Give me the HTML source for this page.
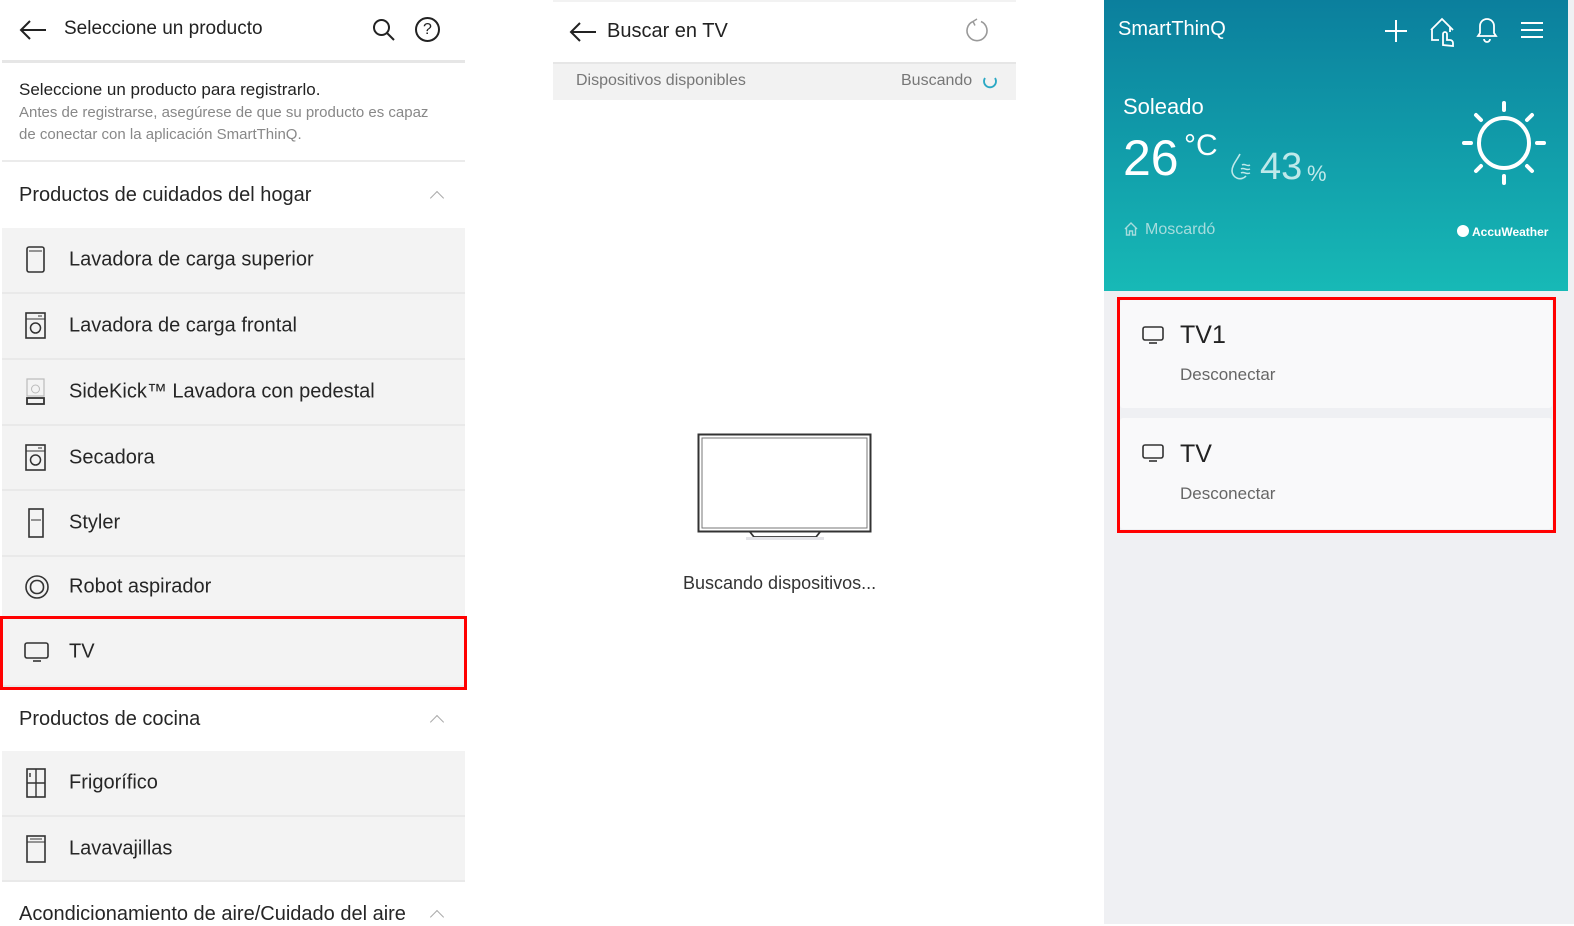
<!DOCTYPE html>
<html><head><meta charset="utf-8"><style>
*{margin:0;padding:0;box-sizing:border-box}
body{width:1574px;height:924px;background:#fff;position:relative;overflow:hidden;font-family:"Liberation Sans",sans-serif;color:#222}
.a{position:absolute}
.row{position:absolute;left:2px;width:463px;background:#f3f3f3;border-bottom:2px solid #e9e9e9}
.row span{position:absolute;left:67px;top:50%;transform:translateY(-50%);font-size:20px;color:#262626}
.row svg{position:absolute;left:22px;top:50%;transform:translateY(-50%)}
.sec{position:absolute;left:19px;font-size:20px;color:#262626}
.chev{position:absolute;left:432px;width:10px;height:10px;border-left:1.5px solid #aaa;border-top:1.5px solid #aaa;transform:rotate(45deg)}
</style></head><body>
<!-- LEFT -->
<svg class="a" style="left:18px;top:19px" width="30" height="22" viewBox="0 0 30 22"><path d="M28 11H3M12 2 3 11l9 9" fill="none" stroke="#222" stroke-width="2"/></svg>
<div class="a" style="left:64px;top:18px;font-size:19px;color:#222">Seleccione un producto</div>
<svg class="a" style="left:371px;top:17px" width="26" height="26" viewBox="0 0 26 26"><circle cx="10.5" cy="10.5" r="7.5" fill="none" stroke="#222" stroke-width="2"/><path d="M16 16l7 7" stroke="#222" stroke-width="2"/></svg>
<div class="a" style="left:415px;top:17px;width:25px;height:25px;border:2px solid #222;border-radius:50%;text-align:center;font-size:16px;line-height:21px;color:#222">?</div>
<div class="a" style="left:2px;top:60px;width:463px;height:3px;background:#e6e6e6"></div>
<div class="a" style="left:19px;top:80px;font-size:17px;color:#222">Seleccione un producto para registrarlo.</div>
<div class="a" style="left:19px;top:102px;font-size:15px;line-height:22px;color:#888;width:428px">Antes de registrarse, asegúrese de que su producto es capaz de conectar con la aplicación SmartThinQ.</div>
<div class="a" style="left:2px;top:160px;width:463px;height:2px;background:#ebebeb"></div>
<div class="sec" style="top:184px">Productos de cuidados del hogar</div><div class="chev" style="top:193px"></div>
<div class="row" style="top:228px;height:66px"><svg width="24" height="30"><rect x="3" y="2" width="17" height="25" rx="2" fill="none" stroke="#333" stroke-width="1.6"/><path d="M5 6h13" stroke="#333"/></svg><span>Lavadora de carga superior</span></div>
<div class="row" style="top:294px;height:66px"><svg width="24" height="30"><rect x="2" y="2" width="19" height="25" fill="none" stroke="#333" stroke-width="1.6"/><circle cx="11.5" cy="17" r="5" fill="none" stroke="#333" stroke-width="1.5"/><path d="M2 8h19M14 5h4" stroke="#333"/></svg><span>Lavadora de carga frontal</span></div>
<div class="row" style="top:360px;height:66px"><svg width="24" height="30"><rect x="3" y="2" width="17" height="17" fill="none" stroke="#bbb" stroke-width="1.2"/><circle cx="11.5" cy="12" r="4" fill="none" stroke="#bbb"/><rect x="3" y="21" width="17" height="6" fill="none" stroke="#333" stroke-width="1.8"/></svg><span>SideKick™ Lavadora con pedestal</span></div>
<div class="row" style="top:426px;height:65px"><svg width="24" height="30"><rect x="2" y="2" width="19" height="25" fill="none" stroke="#333" stroke-width="1.6"/><circle cx="11.5" cy="17" r="5" fill="none" stroke="#333" stroke-width="1.5"/><path d="M2 8h19M14 5h4" stroke="#333"/></svg><span>Secadora</span></div>
<div class="row" style="top:491px;height:66px"><svg width="24" height="32"><rect x="5" y="2" width="14" height="28" fill="none" stroke="#333" stroke-width="1.6"/><path d="M7 13h10" stroke="#333"/></svg><span>Styler</span></div>
<div class="row" style="top:557px;height:62px"><svg width="26" height="26"><circle cx="13" cy="13" r="11" fill="none" stroke="#333" stroke-width="1.6"/><rect x="6.5" y="6.5" width="13" height="13" rx="6" fill="none" stroke="#333" stroke-width="1.6"/></svg><span>Robot aspirador</span></div>
<div class="row" style="top:619px;height:68px"><svg width="26" height="22"><rect x="1" y="2" width="23" height="15" rx="2" fill="none" stroke="#333" stroke-width="1.6"/><path d="M9 20h8" stroke="#333" stroke-width="1.6"/></svg><span>TV</span></div>
<div class="a" style="left:0;top:616px;width:467px;height:74px;border:3px solid #f00"></div>
<div class="sec" style="top:708px">Productos de cocina</div><div class="chev" style="top:717px"></div>
<div class="row" style="top:751px;height:66px"><svg width="24" height="32"><rect x="3" y="2" width="18" height="28" fill="none" stroke="#333" stroke-width="1.6"/><path d="M12 2v28M3 16h18M6 6v4" stroke="#333" stroke-width="1.4"/></svg><span>Frigorífico</span></div>
<div class="row" style="top:817px;height:65px"><svg width="24" height="30"><rect x="3" y="2" width="18" height="26" fill="none" stroke="#333" stroke-width="1.6"/><path d="M3 8h18M6 5h12" stroke="#333"/></svg><span>Lavavajillas</span></div>
<div class="sec" style="top:903px">Acondicionamiento de aire/Cuidado del aire</div><div class="chev" style="top:912px"></div>

<!-- MIDDLE -->
<div class="a" style="left:553px;top:0;width:463px;height:2px;background:#f2f2f2"></div>
<svg class="a" style="left:568px;top:21px" width="30" height="22" viewBox="0 0 30 22"><path d="M28 11H3M12 2 3 11l9 9" fill="none" stroke="#222" stroke-width="2"/></svg>
<div class="a" style="left:607px;top:20px;font-size:20px;color:#222">Buscar en TV</div>
<svg class="a" style="left:964px;top:18px" width="26" height="26" viewBox="0 0 26 26"><path d="M9 3.5A10 10 0 1 0 17 3.5" fill="none" stroke="#999" stroke-width="1.6"/><path d="M9 3.5 13 1M9 3.5 11 7.5" fill="none" stroke="#999" stroke-width="1.4"/></svg>
<div class="a" style="left:553px;top:62px;width:463px;height:38px;background:#f2f2f2;border-top:2px solid #e6e6e6"></div>
<div class="a" style="left:576px;top:72px;font-size:16px;color:#777">Dispositivos disponibles</div>
<div class="a" style="left:901px;top:72px;font-size:16px;color:#777">Buscando</div>
<svg class="a" style="left:982px;top:73px" width="16" height="16"><path d="M3 5A6 6 0 1 0 13 5" fill="none" stroke="#2aa8c4" stroke-width="1.8"/></svg>
<svg class="a" style="left:697px;top:433px" width="176" height="108" viewBox="0 0 176 108"><rect x="1.5" y="1.5" width="172" height="97" fill="none" stroke="#333" stroke-width="2"/><rect x="5" y="5" width="165" height="90" fill="none" stroke="#777" stroke-width="1"/><path d="M53 99l4 5h62l4-5" fill="none" stroke="#333" stroke-width="1.8"/><rect x="49" y="104" width="78" height="3" fill="#e4e4e8"/></svg>
<div class="a" style="left:683px;top:573px;font-size:18px;color:#333">Buscando dispositivos...</div>

<!-- RIGHT -->
<div class="a" style="left:1104px;top:0;width:470px;height:924px;background:#eff0f3"></div>
<div class="a" style="left:1104px;top:0;width:464px;height:291px;background:linear-gradient(#0b7f9d,#17b9b6)"></div>
<div class="a" style="left:1118px;top:18px;font-size:20px;color:#fff">SmartThinQ</div>
<svg class="a" style="left:1384px;top:19px" width="24" height="24"><path d="M12 1v22M1 12h22" stroke="#fff" stroke-width="2"/></svg>
<svg class="a" style="left:1428px;top:16px" width="28" height="32" viewBox="0 0 28 32"><path d="M4 13v11h7M3 14 14 3l11 11M22 11v5" fill="none" stroke="#fff" stroke-width="1.8"/><path d="M15 29v-11a2 2 0 0 1 4 0v6h3a3 3 0 0 1 3 3v3z" fill="none" stroke="#fff" stroke-width="1.8"/></svg>
<svg class="a" style="left:1475px;top:16px" width="24" height="28" viewBox="0 0 24 28"><path d="M3 20h18l-2-3V10a7 7 0 0 0-14 0v7z" fill="none" stroke="#fff" stroke-width="1.8"/><path d="M9 23a3 3 0 0 0 6 0" fill="none" stroke="#fff" stroke-width="1.8"/></svg>
<svg class="a" style="left:1521px;top:20px" width="22" height="20"><path d="M0 3h22M0 10h22M0 17h22" stroke="#fff" stroke-width="2"/></svg>
<div class="a" style="left:1123px;top:94px;font-size:22px;color:#fff">Soleado</div>
<div class="a" style="left:1123px;top:129px;font-size:50px;color:#fff">26</div>
<div class="a" style="left:1184px;top:129px;font-size:30px;color:#fff">°C</div>
<svg class="a" style="left:1230px;top:152px" width="26" height="30" viewBox="0 0 26 30"><path d="M10 2C7 8 2 13 2 19a8 8 0 0 0 14 5" fill="none" stroke="#bfe9ea" stroke-width="1.6"/><path d="M11 17c3-2 5 2 9 0M11 21c3-2 5 2 9 0M12 13c3-2 5 2 8 0" fill="none" stroke="#bfe9ea" stroke-width="1.4"/></svg>
<div class="a" style="left:1260px;top:146px;font-size:38px;color:#bfe9ea">43</div>
<div class="a" style="left:1307px;top:161px;font-size:22px;color:#bfe9ea">%</div>
<svg class="a" style="left:1462px;top:101px" width="84" height="84" viewBox="0 0 84 84"><circle cx="42" cy="42" r="25" fill="none" stroke="#fff" stroke-width="4"/><g stroke="#fff" stroke-width="4" stroke-linecap="round"><path d="M42 2v7M42 75v7M2 42h7M75 42h7M14 14l5 5M65 65l5 5M70 14l-5 5M19 65l-5 5"/></g></svg>
<svg class="a" style="left:1123px;top:221px" width="16" height="16"><path d="M2 8l6-6 6 6M3.5 7v7h3v-4h3v4h3V7" fill="none" stroke="#a6dcdd" stroke-width="1.4"/></svg>
<div class="a" style="left:1145px;top:221px;font-size:16px;color:#a6dcdd">Moscardó</div>
<div class="a" style="left:1457px;top:225px;width:12px;height:12px;border-radius:50%;background:#fff"></div>
<div class="a" style="left:1472px;top:225px;font-size:12px;font-weight:bold;color:#fff">AccuWeather</div>
<div class="a" style="left:1120px;top:300px;width:432px;height:108px;background:#f9f9fa;border-radius:3px"></div>
<div class="a" style="left:1120px;top:418px;width:432px;height:111px;background:#f9f9fa;border-radius:3px"></div>
<svg class="a" style="left:1142px;top:326px" width="22" height="20"><rect x="1" y="1" width="20" height="13" rx="2" fill="none" stroke="#333" stroke-width="1.6"/><path d="M7 17h8" stroke="#333" stroke-width="1.6"/></svg>
<div class="a" style="left:1180px;top:321px;font-size:25px;color:#222">TV1</div>
<div class="a" style="left:1180px;top:365px;font-size:17px;color:#666">Desconectar</div>
<svg class="a" style="left:1142px;top:444px" width="22" height="20"><rect x="1" y="1" width="20" height="13" rx="2" fill="none" stroke="#333" stroke-width="1.6"/><path d="M7 17h8" stroke="#333" stroke-width="1.6"/></svg>
<div class="a" style="left:1180px;top:440px;font-size:25px;color:#222">TV</div>
<div class="a" style="left:1180px;top:484px;font-size:17px;color:#666">Desconectar</div>
<div class="a" style="left:1117px;top:297px;width:439px;height:236px;border:3px solid #f00"></div>
</body></html>
